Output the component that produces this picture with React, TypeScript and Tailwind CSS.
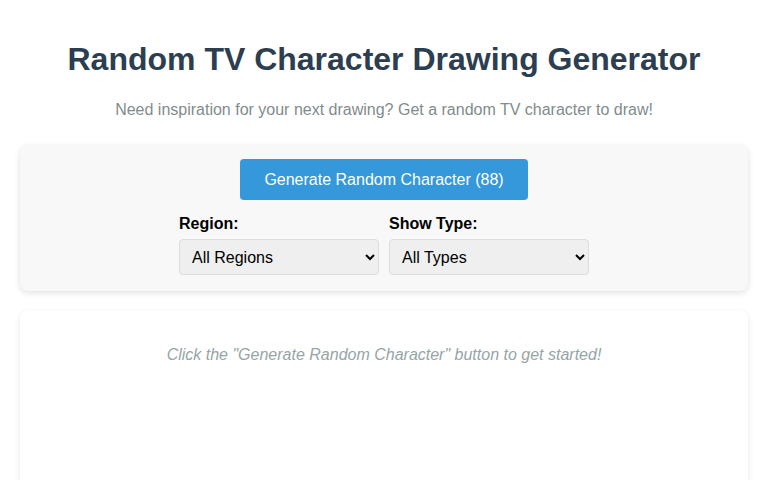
import React, { useState } from 'react'

const regions = ['All Regions', 'North America', 'Europe', 'Asia', 'Latin America']
const showTypes = ['All Types', 'Animated', 'Live Action']

const App: React.FC = () => {
  const [region, setRegion] = useState('All Regions')
  const [showType, setShowType] = useState('All Types')

  return (
    <div
      className="min-h-screen bg-white px-5 pt-5"
      style={{ fontFamily: '"Liberation Sans", Arial, sans-serif' }}
    >
      <div className="mx-auto max-w-[800px]">
        <h1 className="mt-[21px] text-center text-[32px] font-bold leading-[37px] text-[#2c3e50]">
          Random TV Character Drawing Generator
        </h1>
        <p className="mt-[23px] text-center text-base leading-[18px] text-[#7f8c8d]">
          Need inspiration for your next drawing? Get a random TV character to draw!
        </p>

        <div className="mt-[26px] flex flex-col items-center rounded-lg bg-[#f8f8f8] px-5 pb-[16px] pt-[14px] shadow-[0_2px_6px_rgba(0,0,0,0.12)]">
          <button className="h-[41px] rounded bg-[#3498db] px-6 text-base text-white">
            Generate Random Character (88)
          </button>

          <div className="mt-[15px] flex gap-[10px]">
            <div className="flex flex-col">
              <label className="mb-[6px] text-base font-bold leading-[18px] text-black">Region:</label>
              <select
                value={region}
                onChange={(e) => setRegion(e.target.value)}
                className="h-[36px] w-[200px] rounded border border-[#dcdcdc] bg-[#efefef] pl-[8px] pr-1 text-base text-black"
              >
                {regions.map((r) => (
                  <option key={r}>{r}</option>
                ))}
              </select>
            </div>
            <div className="flex flex-col">
              <label className="mb-[6px] text-base font-bold leading-[18px] text-black">Show Type:</label>
              <select
                value={showType}
                onChange={(e) => setShowType(e.target.value)}
                className="h-[36px] w-[200px] rounded border border-[#dcdcdc] bg-[#efefef] pl-[8px] pr-1 text-base text-black"
              >
                {showTypes.map((t) => (
                  <option key={t}>{t}</option>
                ))}
              </select>
            </div>
          </div>
        </div>

        <div className="mt-5 min-h-[300px] rounded-lg bg-white px-5 pt-[35px] shadow-[0_2px_6px_rgba(0,0,0,0.1)]">
          <p className="text-center text-base italic leading-[18px] text-[#95a5a6]">
            Click the "Generate Random Character" button to get started!
          </p>
        </div>
      </div>
    </div>
  )
}

export default App
